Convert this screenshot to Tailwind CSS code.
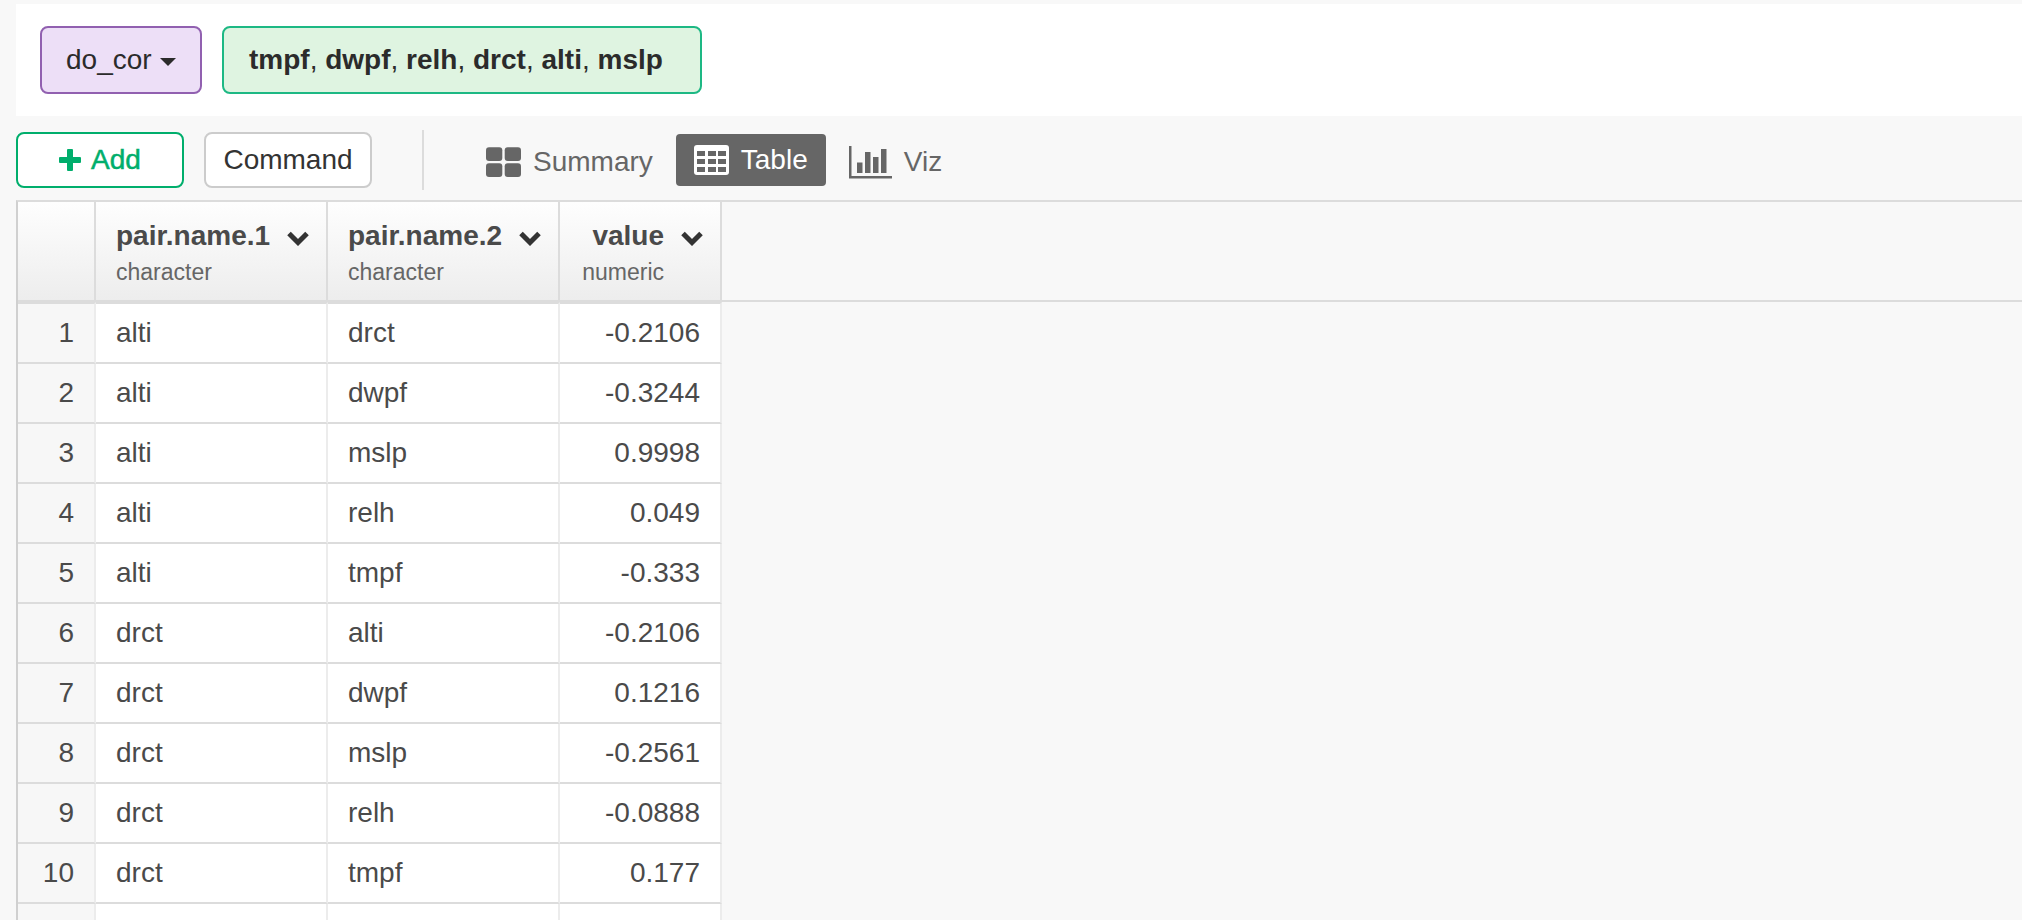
<!DOCTYPE html>
<html lang="en">
<head>
  <meta charset="UTF-8" />
  <meta name="viewport" content="width=device-width, initial-scale=1.0" />
  <title>do_cor</title>
  <script src="https://cdn.jsdelivr.net/npm/@tailwindcss/browser@4"></script>
</head>
<body class="h-screen overflow-hidden flex flex-col pt-1 pl-4 bg-[#f8f8f8] font-['Liberation_Sans',Arial,sans-serif] text-[28px] leading-9 text-[#4a4a4a]">
  <!-- command bar -->
  <header class="shrink-0 flex items-center gap-5 h-28 px-6 bg-white text-[#2b2b2b]">
    <label class="relative block">
      <select aria-label="Command" class="appearance-none block h-17 w-[162px] pl-6 border-2 border-[#9160b0] rounded-lg bg-[#eddff7]">
        <option>do_cor</option>
      </select>
      <svg class="absolute right-[26px] top-8 w-4 h-2 pointer-events-none" viewBox="0 0 16 8" fill="currentColor">
        <path d="M0 0h16L8 8z" />
      </svg>
    </label>
    <button type="button" class="h-17 pl-[25px] pr-[37px] border-2 border-[#1db884] rounded-lg bg-[#dff4e1] whitespace-nowrap text-left">
      <b>tmpf</b>, <b>dwpf</b>, <b>relh</b>, <b>drct</b>, <b>alti</b>, <b>mslp</b>
    </button>
  </header>

  <!-- toolbar -->
  <div class="shrink-0 flex items-center h-21 pt-1">
    <button type="button" class="flex items-center justify-center gap-[10px] w-42 h-14 border-2 border-[#00ae6c] rounded-lg bg-white text-[#00ae6c] [-webkit-text-stroke:0.5px_currentColor]">
      <svg class="w-[22px] h-[22px]" viewBox="0 0 22 22" fill="currentColor">
        <path d="M9 0h4a1 1 0 0 1 1 1v7h7a1 1 0 0 1 1 1v4a1 1 0 0 1-1 1h-7v7a1 1 0 0 1-1 1H9a1 1 0 0 1-1-1v-7H1a1 1 0 0 1-1-1V9a1 1 0 0 1 1-1h7V1a1 1 0 0 1 1-1z" />
      </svg>
      Add
    </button>
    <button type="button" class="w-42 h-14 ml-5 border-2 border-[#cccccc] rounded-lg bg-white text-[#333333]">Command</button>
    <div class="w-[2px] h-15 ml-[50px] bg-[#dcdcdc]"></div>

    <nav class="flex items-center gap-[5px] ml-11 text-[#666666]">
      <button type="button" class="flex items-center gap-3 h-13 px-[18px] pt-1">
        <svg class="w-[35px] h-[30px]" viewBox="0 0 35 30" fill="currentColor">
          <rect x="0" y="0.300" width="16.300" height="13.700" rx="3" />
          <rect x="18.700" y="0.300" width="16.300" height="13.700" rx="3" />
          <rect x="0" y="16.300" width="16.300" height="13.700" rx="3" />
          <rect x="18.700" y="16.300" width="16.300" height="13.700" rx="3" />
        </svg>
        Summary
      </button>
      <button type="button" class="flex items-center gap-3 h-13 px-[18px] rounded bg-[#666666] text-white">
        <svg class="w-[35px] h-[30px]" viewBox="0 0 35 30">
          <rect width="35" height="30" rx="3" fill="#fff" />
          <path d="M3 6h8v5H3zM14 6h8v5h-8zM24 6h8v5h-8zM3 14h8v5H3zM14 14h8v5h-8zM24 14h8v5h-8zM3 22h8v5H3zM14 22h8v5h-8zM24 22h8v5h-8z" fill="#666" />
        </svg>
        Table
      </button>
      <button type="button" class="flex items-center gap-3 h-13 px-[18px] pt-1">
        <svg class="w-[43px] h-[33px]" viewBox="0 0 43 33" fill="currentColor">
          <path d="M0 0h2.500v30H43v2.500H0zM8 16.500h5.500v10.500H8zM16 6h5.500v21h-5.500zM24 11h5.500v16h-5.500zM32 3h5.500v24h-5.500z" />
        </svg>
        Viz
      </button>
    </nav>
  </div>

  <!-- data grid -->
  <main class="flex-1 min-h-0 overflow-hidden border-t-2 border-l-2 border-t-[#dcdcdc] border-l-[#d0d0d0]">
    <table class="w-full table-fixed border-separate border-spacing-0">
      <colgroup>
        <col class="w-[78px]" />
        <col class="w-[232px]" />
        <col class="w-[232px]" />
        <col class="w-[162px]" />
        <col />
      </colgroup>
      <thead>
        <tr id="columns"></tr>
      </thead>
      <tbody id="rows"></tbody>
    </table>
  </main>

  <script>
    const columns = [
      { name: 'pair.name.1', type: 'character' },
      { name: 'pair.name.2', type: 'character' },
      { name: 'value', type: 'numeric' }
    ];

    const rows = [
      [1, 'alti', 'drct', -0.2106],
      [2, 'alti', 'dwpf', -0.3244],
      [3, 'alti', 'mslp', 0.9998],
      [4, 'alti', 'relh', 0.049],
      [5, 'alti', 'tmpf', -0.333],
      [6, 'drct', 'alti', -0.2106],
      [7, 'drct', 'dwpf', 0.1216],
      [8, 'drct', 'mslp', -0.2561],
      [9, 'drct', 'relh', -0.0888],
      [10, 'drct', 'tmpf', 0.177],
      ['', '', '', '']
    ];

    const th = 'h-[100px] pt-4 pl-5 pr-[17px] align-top border-b-2 border-r-2 border-[#dcdcdc] bg-linear-to-b from-[#fefefe] to-[#ededed]';
    const td = 'h-15 py-0 px-5 border-b-2 border-r-2 border-b-[#dcdcdc] border-r-[#ececec]';

    document.getElementById('columns').innerHTML =
      `<td class="${th}"></td>` +
      columns.map((c) => `
        <th scope="col" class="${th}">
          <div class="flex justify-between">
            <div class="${c.type === 'numeric' ? 'w-full pr-[17px] text-right' : 'text-left'}">
              <div>${c.name}</div>
              <div class="text-[23px]/9 font-normal text-[#666666]">${c.type}</div>
            </div>
            <button type="button" aria-label="${c.name} menu" class="shrink-0 self-start pt-3 text-[#333333]">
              <svg class="w-[22px] h-4" viewBox="0 0 22 16" fill="none" stroke="currentColor" stroke-width="5">
                <path d="M2 3.500l9 9 9-9" />
              </svg>
            </button>
          </div>
        </th>`).join('') +
      '<td class="border-b-2 border-[#dcdcdc]"></td>';

    document.getElementById('rows').innerHTML = rows.map((r, i) => {
      const cell = i === 0 ? td + ' border-t-2 border-t-[#dcdcdc] h-[62px]' : td;
      return `
        <tr>
          <th scope="row" class="${cell} font-normal text-right bg-[#f7f7f7]">${r[0]}</th>
          <td class="${cell} bg-white">${r[1]}</td>
          <td class="${cell} bg-white">${r[2]}</td>
          <td class="${cell} bg-white text-right">${r[3]}</td>
        </tr>`;
    }).join('');
  </script>
</body>
</html>
